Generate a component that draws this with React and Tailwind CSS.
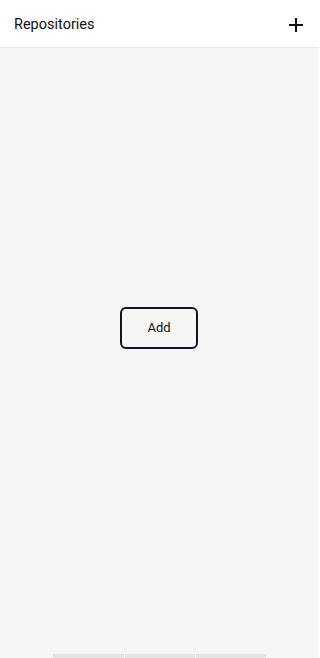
import React from 'react';

const App = () => {
  return (
    <div
      className="flex flex-col h-[658px] w-[318px] bg-[#f6f6f6] overflow-hidden"
      style={{ fontFamily: 'Roboto, "Noto Sans", sans-serif' }}
    >
      {/* header */}
      <div className="flex items-center justify-between h-[48px] bg-white border-b border-[#e4e4e4] pl-[14px] pr-[15px] pt-[3px]">
        <span className="text-[14.5px] text-[#111]">Repositories</span>
        <button className="w-[14px] h-[14px] flex items-center justify-center">
          <svg width="14" height="14" viewBox="0 0 14 14" fill="none" stroke="#111" strokeWidth="2">
            <path d="M7 0v14M0 7h14" />
          </svg>
        </button>
      </div>

      {/* content */}
      <div className="flex-1 flex items-center justify-center pb-[46px]">
        <button className="w-[78px] h-[42px] rounded-[6px] border-2 border-[#14141f] bg-[#f6f6f6] text-[13px] text-[#111]">
          Add
        </button>
      </div>

      {/* bottom scroll indicator */}
      <div className="flex justify-center gap-[1px] h-[4px]">
        <div className="w-[71px] bg-[#e4e4e4]" />
        <div className="w-[70px] bg-[#e4e4e4]" />
        <div className="w-[70px] bg-[#e4e4e4]" />
      </div>
    </div>
  );
};

export default App;
